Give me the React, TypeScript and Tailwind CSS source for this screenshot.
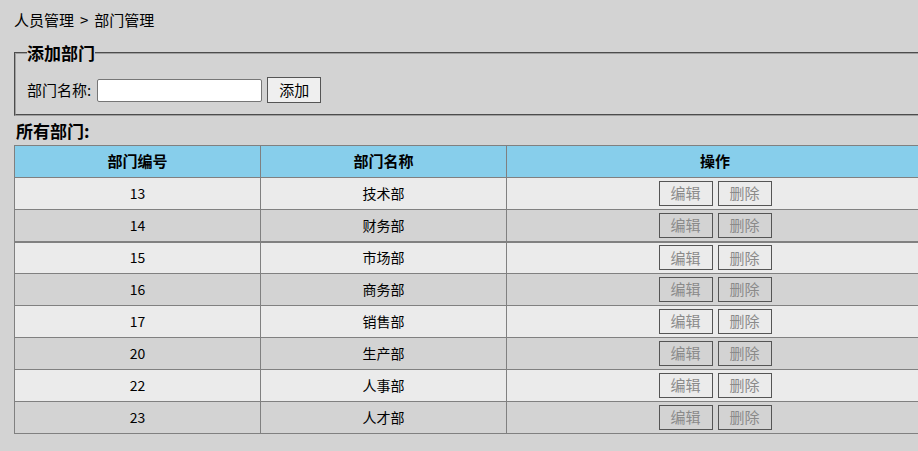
import React from 'react';

interface Dept {
  id: number;
  name: string;
}

const depts: Dept[] = [
  { id: 13, name: '技术部' },
  { id: 14, name: '财务部' },
  { id: 15, name: '市场部' },
  { id: 16, name: '商务部' },
  { id: 17, name: '销售部' },
  { id: 20, name: '生产部' },
  { id: 22, name: '人事部' },
  { id: 23, name: '人才部' },
];

const font = { fontFamily: '"Microsoft YaHei", "Noto Sans CJK SC", sans-serif' };

export default function App() {
  return (
    <div className="w-[918px] h-[451px] overflow-hidden bg-[#d3d3d3] text-black" style={font}>
      <div className="w-[940px] pl-[14px] pt-[10px]">
        {/* Breadcrumb */}
        <div className="h-[20px] leading-[20px] text-[15px]">
          人员管理<span className="mx-[6px]">&gt;</span>部门管理
        </div>

        {/* Add form */}
        <fieldset className="mt-[12px] border-2 [border-style:groove] border-[#a0a0a0] pl-[11px] pt-[13px] pb-[11px]">
          <legend className="p-0 text-[17px] font-bold leading-[22px]">添加部门</legend>
          <div className="flex items-center">
            <label className="text-[15px] mr-[6px]">部门名称:</label>
            <input
              type="text"
              className="w-[165px] h-[23px] bg-white border border-[#767676] rounded-[2px] outline-none"
            />
            <button className="ml-[5px] w-[54px] h-[26px] bg-[#efefef] border border-[#555] text-[15px]">
              添加
            </button>
          </div>
        </fieldset>

        <h3 className="mt-[4px] ml-[2px] text-[17px] font-bold leading-[22px]">所有部门:</h3>

        {/* Department table */}
        <table className="mt-[3px] w-[910px] border-collapse">
          <thead>
            <tr className="bg-[#87ceeb] h-[32px]">
              <th className="w-[246px] border border-[#808080] text-[15px] font-bold">部门编号</th>
              <th className="w-[246px] border border-[#808080] text-[15px] font-bold">部门名称</th>
              <th className="border border-[#808080] text-[15px] font-bold">操作</th>
            </tr>
          </thead>
          <tbody>
            {depts.map((d, i) => (
              <tr
                key={d.id}
                className={`h-[32px] ${i % 2 === 0 ? 'bg-[#ebebeb]' : 'bg-[#d3d3d3]'}`}
              >
                <td className={`border border-[#808080] text-center text-[14px] ${i === 1 ? 'border-b-2' : ''}`}>{d.id}</td>
                <td className={`border border-[#808080] text-center text-[14px] ${i === 1 ? 'border-b-2' : ''}`}>{d.name}</td>
                <td className={`border border-[#808080] text-center ${i === 1 ? 'border-b-2' : ''}`}>
                  <div className="flex justify-center gap-[5px]">
                    <button className="w-[54px] h-[25px] border border-[#555] text-[15px] text-[#8a8a8a] bg-transparent">
                      编辑
                    </button>
                    <button className="w-[54px] h-[25px] border border-[#555] text-[15px] text-[#8a8a8a] bg-transparent">
                      删除
                    </button>
                  </div>
                </td>
              </tr>
            ))}
          </tbody>
        </table>
      </div>
    </div>
  );
}
